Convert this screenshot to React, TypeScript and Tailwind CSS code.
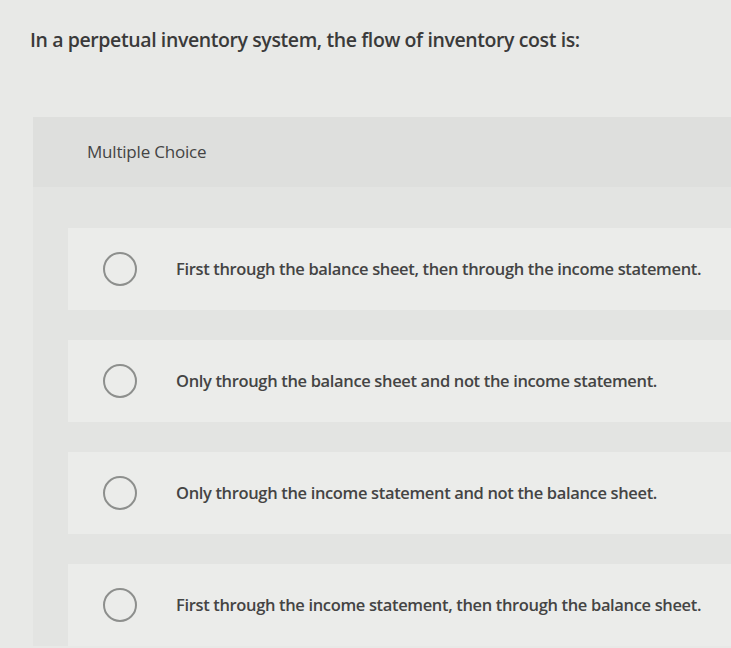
import React from "react";

const options = [
  "First through the balance sheet, then through the income statement.",
  "Only through the balance sheet and not the income statement.",
  "Only through the income statement and not the balance sheet.",
  "First through the income statement, then through the balance sheet.",
];

export default function App() {
  return (
    <div
      className="w-[731px] h-[648px] overflow-hidden bg-[#e8e9e7] text-[#3f3f3f]"
      style={{ fontFamily: "'Open Sans', Lato, sans-serif" }}
    >
      {/* Question */}
      <div className="pl-[30px] pt-[25px] h-[117px]">
        <h1 className="text-[19.5px] font-semibold tracking-[-0.4px] text-[#3a3a3a]">
          In a perpetual inventory system, the flow of inventory cost is:
        </h1>
      </div>

      <div className="ml-[33px]">
        {/* Header */}
        <div className="h-[70px] bg-[#dedfdd] pl-[54px] pt-[22px]">
          <span className="text-[17px] font-medium tracking-[-0.2px] text-[#444]">Multiple Choice</span>
        </div>

        {/* Answers */}
        <div className="bg-[#e3e4e2] pt-[41px] pl-[35px] flex flex-col gap-[30px]">
          {options.map((text) => (
            <div key={text} className="h-[82px] bg-[#ebecea] flex items-center">
              <span className="ml-[35px] w-[34px] h-[34px] rounded-full border-2 border-[#8d8f8d] shrink-0" />
              <span className="ml-[39px] text-[16.5px] font-semibold tracking-[-0.35px] text-[#444]">
                {text}
              </span>
            </div>
          ))}
        </div>
      </div>
    </div>
  );
}
